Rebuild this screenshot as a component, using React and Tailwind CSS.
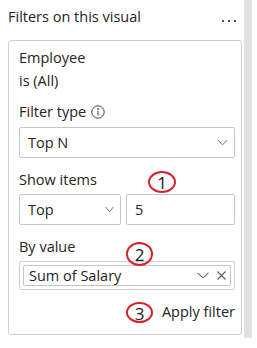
import React from "react";

function Chevron({ w = 11 }) {
  return (
    <svg width={w} height="7" viewBox="0 0 11 7" preserveAspectRatio="none" fill="none" stroke="#6b6a69" strokeWidth="1">
      <path d="M0.5 0.8 L5.5 5.8 L10.5 0.8" />
    </svg>
  );
}

function Mark({ n, className }) {
  return (
    <div className={"absolute flex items-center justify-center rounded-[50%] border-2 border-[#d8202a] text-[17px] leading-none text-[#1a1a1a] " + className}>
      <span className="mt-[1px]">{n}</span>
    </div>
  );
}

export default function App() {
  return (
    <div
      className="relative flex h-[348px] w-[257px] bg-white text-[14.5px] leading-[20px] text-[#252423]"
      style={{ fontFamily: '"Segoe UI", "Open Sans", "Noto Sans", sans-serif' }}
    >
      <div className="w-[244px] pl-[8px]">
        <div className="flex h-[40px] items-start justify-between pr-[8px] pt-[7px]">
          <span>Filters on this visual</span>
          <div className="mt-[13px] flex gap-[4px]">
            <span className="h-[2px] w-[2px] bg-[#555]" />
            <span className="h-[2px] w-[2px] bg-[#555]" />
            <span className="h-[2px] w-[2px] bg-[#555]" />
          </div>
        </div>
        <div className="relative flex h-[295px] w-[234px] flex-col rounded-[3px] border border-[#d2d0ce] pl-[10px] pr-[6px] pt-[7px]">
          <div>Employee</div>
          <div className="mt-[3px]">is (All)</div>
          <div className="mt-[11px] flex items-center gap-[5px]">
            <span>Filter type</span>
            <svg width="14" height="14" viewBox="0 0 14 14" fill="none" stroke="#444" strokeWidth="1">
              <circle cx="7" cy="7" r="6.2" />
              <path d="M7 6 V10.5" />
              <circle cx="7" cy="4" r="0.5" fill="#444" />
            </svg>
          </div>
          <div className="mt-[5px] flex h-[31px] items-center justify-between rounded-[2px] border border-[#c8c6c4] pl-[8px] pr-[6px]">
            <span>Top N</span>
            <Chevron />
          </div>
          <div className="mt-[12px]">Show items</div>
          <div className="mt-[4px] flex gap-[5px]">
            <div className="flex h-[31px] w-[102px] items-center justify-between rounded-[2px] border border-[#c8c6c4] pl-[8px] pr-[6px]">
              <span>Top</span>
              <Chevron w={9} />
            </div>
            <div className="flex h-[31px] flex-1 items-center rounded-[2px] border border-[#c8c6c4] pl-[8px]">
              5
            </div>
          </div>
          <div className="mt-[12px]">By value</div>
          <div className="mt-[4px] flex h-[29px] rounded-[2px] border border-[#d2d0ce] p-[3px]">
            <div className="flex flex-1 items-center justify-between rounded-[2px] border border-[#c8c6c4] pl-[5px] pr-[4px]">
              <span>Sum of Salary</span>
              <div className="flex items-center gap-[8px]">
                <Chevron w={12} />
                <svg width="9" height="9" viewBox="0 0 9 9" stroke="#605e5c" strokeWidth="1.1">
                  <path d="M0.5 0.5 L8.5 8.5 M8.5 0.5 L0.5 8.5" />
                </svg>
              </div>
            </div>
          </div>
          <div className="mt-[12px] text-right">Apply filter</div>
        </div>
      </div>
      <div className="h-[338px] w-[8px] bg-[#e1e1e1]" />
      <Mark n="1" className="left-[148px] top-[171px] h-[22px] w-[28px]" />
      <Mark n="2" className="left-[126px] top-[242px] h-[24px] w-[27px]" />
      <Mark n="3" className="left-[126px] top-[302px] h-[21px] w-[27px]" />
    </div>
  );
}
